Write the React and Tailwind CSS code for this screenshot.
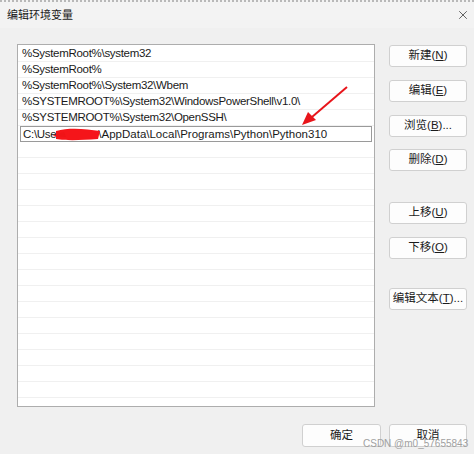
import { X } from 'lucide-react';

const paths = [
  '%SystemRoot%\\system32',
  '%SystemRoot%',
  '%SystemRoot%\\System32\\Wbem',
  '%SYSTEMROOT%\\System32\\WindowsPowerShell\\v1.0\\',
  '%SYSTEMROOT%\\System32\\OpenSSH\\',
  '',
];

const font = { fontFamily: '"Liberation Sans", "Noto Sans CJK SC", sans-serif' };

function Btn({ children, className = '' }) {
  return (
    <button
      className={`flex h-[22px] w-[78px] items-center justify-center rounded-[3px] border border-[#d0d0d0] bg-[#fdfdfd] text-[11.5px] text-[#1b1b1b] ${className}`}
    >
      {children}
    </button>
  );
}

export default function App() {
  const rows = Array.from({ length: 23 }, (_, i) => paths[i] ?? '');

  return (
    <div className="relative flex h-[454px] w-[474px] flex-col overflow-hidden bg-[#f0f0f0]" style={font}>
      <div className="flex h-[28px] shrink-0 items-center justify-between border-t-2 border-dotted border-[#b8b8b8] bg-[#f3f3f3] pl-[7px] pr-[4px]">
        <span className="text-[11px] text-[#1a1a1a]">编辑环境变量</span>
        <X className="h-[14px] w-[14px] text-[#333]" strokeWidth={1.3} />
      </div>

      <div className="flex gap-[14px] pl-[17px] pt-[16px]">
        <div className="h-[363px] w-[358px] overflow-hidden border border-[#adadad] bg-white pt-px">
          {rows.map((p, i) => (
            <div
              key={i}
              className={`h-[16px] whitespace-nowrap text-[11.5px] leading-[15px] tracking-[-0.3px] text-[#1a1a1a] ${
                i === 5
                  ? 'mx-[2px] border border-[#9a9a9a] pl-[2px] leading-[13px]'
                  : 'border-b border-[#f0f0f0] pl-[4px]'
              }`}
            >
              {i === 5 ? (
                <span>
                  C:\Users<span className="inline-block w-[33px]" />
                  <span className="tracking-[0px]">\AppData\Local\Programs\Python\Python310</span>
                </span>
              ) : (
                p
              )}
            </div>
          ))}
        </div>

        <div className="flex flex-col pt-px">
          <Btn>新建(<u>N</u>)</Btn>
          <Btn className="mt-[13px]">编辑(<u>E</u>)</Btn>
          <Btn className="mt-[13px]">浏览(<u>B</u>)...</Btn>
          <Btn className="mt-[12px]">删除(<u>D</u>)</Btn>
          <Btn className="mt-[31px]">上移(<u>U</u>)</Btn>
          <Btn className="mt-[13px]">下移(<u>O</u>)</Btn>
          <Btn className="mt-[29px]">编辑文本(<u>T</u>)...</Btn>
        </div>
      </div>

      <div className="mt-[17px] flex justify-end gap-[8px] pr-[7px]">
        <Btn className="h-[23px] w-[79px] border-[#4a8fd6]">确定</Btn>
        <Btn className="h-[23px]">取消</Btn>
      </div>

      <span className="absolute left-[363px] top-[436px] whitespace-nowrap text-[10px] text-[#a0a0a0]">
        CSDN @m0_57655843
      </span>

      <svg className="absolute left-0 top-0" width="474" height="454">
        <path d="M56 131 C70 127 86 129 100 131 L98 139 C82 140 68 141 56 139 Z" fill="#f5151a" />
        <path d="M52 136 L64 132 L66 137 Z" fill="#f01418" />
        <line x1="347" y1="87" x2="312" y2="117" stroke="#e8141a" strokeWidth="2" />
        <path d="M302 125 L308 112 L316 120 Z" fill="#e8141a" />
      </svg>
    </div>
  );
}
